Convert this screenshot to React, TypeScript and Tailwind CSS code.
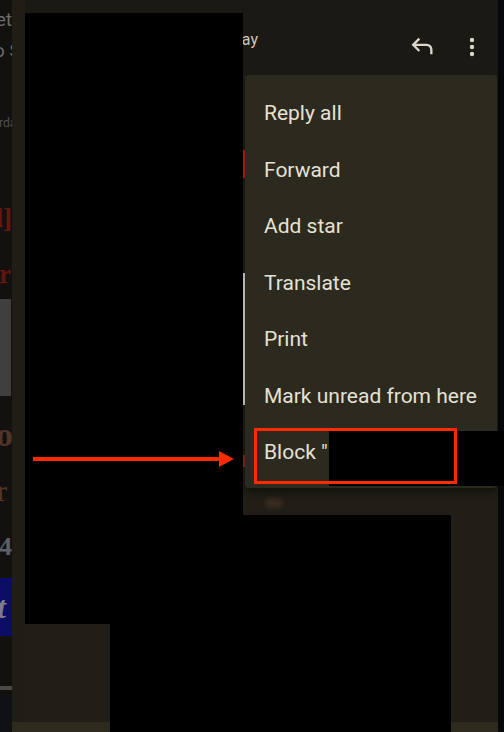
import React from "react";

function LeftStrip() {
  return (
    <div className="w-[12px] h-full shrink-0 flex flex-col overflow-hidden bg-[#121110] font-['Liberation_Serif',serif]">
      <div className="h-[8px] shrink-0" />
      <div className="h-[22px] shrink-0 flex justify-end items-center overflow-hidden whitespace-nowrap text-[19px] leading-none text-[#6c6c6c] font-['Roboto',sans-serif]">et</div>
      <div className="h-[10px] shrink-0" />
      <div className="h-[20px] shrink-0 flex items-center overflow-hidden whitespace-nowrap text-[19px] leading-none text-[#6c6c6c] font-['Roboto',sans-serif]">
        <span className="-ml-[6px]">o Sa</span>
      </div>
      <div className="h-[54px] shrink-0" />
      <div className="h-[18px] shrink-0 flex items-center overflow-hidden whitespace-nowrap text-[12px] leading-none text-[#505050] font-['Roboto',sans-serif]">
        <span className="-ml-[1px]">rday</span>
      </div>
      <div className="h-[71px] shrink-0" />
      <div className="h-[30px] shrink-0 flex justify-end items-center overflow-hidden whitespace-nowrap text-[27px] font-bold leading-none text-[#6a1610]">d]</div>
      <div className="h-[27px] shrink-0" />
      <div className="h-[28px] shrink-0 flex items-center overflow-hidden whitespace-nowrap text-[27px] font-bold leading-none text-[#641510]">
        <span className="-ml-[1px]">ra</span>
      </div>
      <div className="h-[11px] shrink-0" />
      <div className="h-[97px] shrink-0 w-[11px] bg-[#3f3f3f]" />
      <div className="h-[20px] shrink-0" />
      <div className="h-[38px] shrink-0 flex items-center overflow-hidden whitespace-nowrap text-[34px] font-bold leading-none text-[#523529]">
        <span className="-ml-[4px]">o</span>
      </div>
      <div className="h-[22px] shrink-0" />
      <div className="h-[30px] shrink-0 flex items-center overflow-hidden whitespace-nowrap text-[30px] leading-none text-[#523529]">
        <span className="-ml-[3px]">r</span>
      </div>
      <div className="h-[28px] shrink-0" />
      <div className="h-[26px] shrink-0 flex justify-end items-center overflow-hidden whitespace-nowrap text-[26px] font-bold leading-none text-[#5a606c]">4</div>
      <div className="h-[18px] shrink-0" />
      <div className="h-[58px] shrink-0 flex items-center overflow-hidden whitespace-nowrap bg-[#0c0e66] text-[32px] italic font-bold leading-none text-[#7c7c8a]">
        <span className="-ml-[3px]">t</span>
      </div>
      <div className="h-[50px] shrink-0" />
      <div className="h-[4px] shrink-0 bg-[#4a4a4a]" />
      <div className="h-[6px] shrink-0" />
      <div className="flex-1 bg-[#0f1115]" />
    </div>
  );
}

function ReplyIcon() {
  return (
    <svg width="28" height="28" viewBox="0 0 24 24" className="block">
      <path
        fill="#dad6ca"
        d="M19 19v-4q0-1.25-.875-2.125T16 12H6.825l3.6 3.6L9 17l-6-6 6-6 1.425 1.4-3.6 3.6H16q2.075 0 3.538 1.463T21 15v4h-2Z"
      />
    </svg>
  );
}

function MoreIcon() {
  return (
    <svg width="24" height="24" viewBox="0 0 24 24" className="block">
      <circle cx="12" cy="5" r="2.2" fill="#dad6ca" />
      <circle cx="12" cy="12" r="2.2" fill="#dad6ca" />
      <circle cx="12" cy="19" r="2.2" fill="#dad6ca" />
    </svg>
  );
}

const items = [
  "Reply all",
  "Forward",
  "Add star",
  "Translate",
  "Print",
  "Mark unread from here",
  'Block "',
];

export default function App() {
  return (
    <div
      className="relative w-[504px] h-[732px] overflow-hidden flex bg-[#121110]"
      style={{ fontFamily: 'Roboto, "Noto Sans", sans-serif' }}
    >
      <LeftStrip />

      <div className="w-[486px] h-full shrink-0 flex flex-col bg-[#201e16]">
        <header className="h-[75px] shrink-0 flex bg-[#1b1913]">
          <div className="w-[13px] shrink-0 bg-[#1f1d15]" />
          <div className="w-[233px] shrink-0 flex justify-end items-start pt-[28px] text-[16px] text-[#cbc7ba] whitespace-nowrap">
            Today
          </div>
          <div className="flex-1 flex justify-end items-start pr-[14px] gap-[24px]">
            <div className="pt-[32px]">
              <ReplyIcon />
            </div>
            <div className="pt-[35px]">
              <MoreIcon />
            </div>
          </div>
        </header>

        <div className="flex-1 flex">
          <div className="w-[13px] shrink-0 bg-[#1f1d15]" />
          <div className="w-[218px] shrink-0" />
          <div className="w-[2px] shrink-0 flex flex-col">
            <div className="h-[75px] shrink-0" />
            <div className="h-[28px] shrink-0 bg-[#c81e10]" />
            <div className="h-[95px] shrink-0" />
            <div className="h-[132px] shrink-0 bg-[#dcdcdc]" />
            <div className="h-[50px] shrink-0" />
            <div className="h-[12px] shrink-0 bg-[#8a2a20]" />
          </div>
          <div className="flex-1 flex flex-col">
            <div className="h-[423px] shrink-0" />
            <div className="h-[14px] shrink-0 flex pl-[20px]">
              <div className="w-[18px] h-[10px] rounded-full bg-[#3a2a20] blur-[2px]" />
            </div>
          </div>
        </div>

        <div className="h-[10px] shrink-0 bg-[#2e2b1e]" />
      </div>

      <div className="flex-1 bg-[#07080c]" />

      {/* redaction boxes */}
      <div className="absolute left-[25px] top-[13px] w-[218px] h-[611px] bg-black" />
      <div className="absolute left-[110px] top-[515px] w-[341px] h-[217px] bg-black" />

      {/* dropdown menu */}
      <div className="absolute left-[245px] top-[75px] w-[252px] rounded-[4px] bg-[#2c291e] pt-[10.5px] pb-[7px] shadow-[0_4px_8px_rgba(0,0,0,0.45)]">
        {items.map((t) => (
          <div
            key={t}
            className="h-[56.5px] flex items-center pl-[19px] text-[21px] text-[#e5e1d4] whitespace-nowrap"
          >
            {t}
          </div>
        ))}
      </div>

      <div className="absolute left-[329px] top-[431px] w-[175px] h-[55px] bg-black" />

      {/* annotation */}
      <div className="absolute left-[254px] top-[428px] w-[203px] h-[56px] border-[3px] border-[#ff2a00]" />
      <div className="absolute left-[33px] top-[457px] w-[189px] h-[4px] bg-[#ff2a00]" />
      <svg
        className="absolute left-[219px] top-[451px]"
        width="16"
        height="16"
        viewBox="0 0 16 16"
      >
        <polygon points="0,0 15,8 0,16" fill="#ff2a00" />
      </svg>
    </div>
  );
}
